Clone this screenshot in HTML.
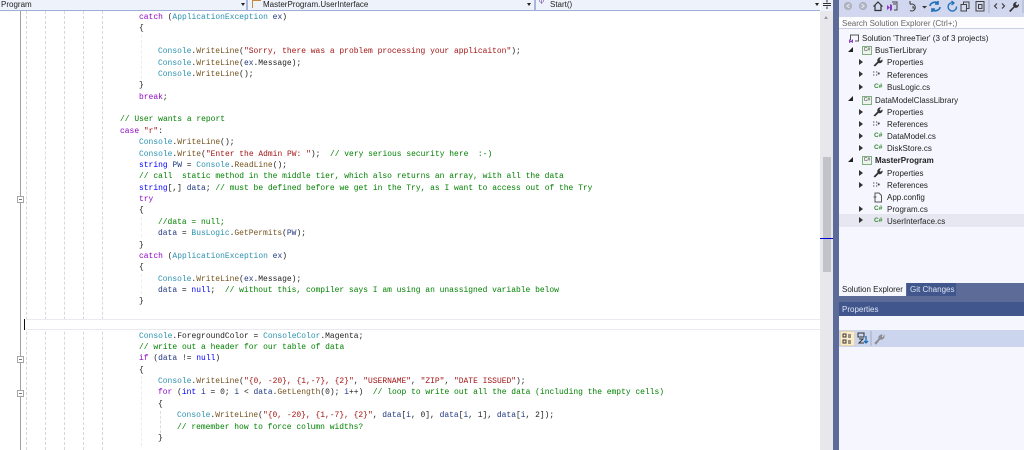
<!DOCTYPE html>
<html><head><meta charset="utf-8"><style>
html,body{margin:0;padding:0;width:1024px;height:450px;overflow:hidden;background:#fff}
body{position:relative;font-family:"Liberation Sans",sans-serif}
.a{position:absolute}
#code{position:absolute;left:0;top:1px;width:820px;height:449px;overflow:hidden;filter:blur(.33px)}
.l{position:absolute;white-space:pre;font:7.96px/11px "Liberation Mono",monospace;color:#1e1e1e}
.k{color:#8f08c4}.b{color:#0000ff}.t{color:#2b91af}.m{color:#74531f}.c{color:#008000}.s{color:#a31515}.v{color:#1f377f}
.g{position:absolute;width:0;border-left:1px dashed #d8d8d8}
#tree{position:absolute;left:0;top:2px;width:1024px;height:240px;filter:blur(.25px)}
.r{position:absolute;white-space:pre;font-size:8px;line-height:12px;color:#1e1e1e}
.tri{position:absolute;left:859px;width:0;height:0;border-left:4px solid #333;border-top:3.5px solid transparent;border-bottom:3.5px solid transparent}
.ex{position:absolute;left:848px;width:0;height:0;border-bottom:5px solid #222;border-left:5px solid transparent}
.cs{position:absolute;left:874px;font:bold 6.5px/8px "Liberation Sans",sans-serif;color:#388a34}
.pj{position:absolute;left:862px;width:8px;height:7px;border:1px solid #7fb07f;background:#eef3ee;font:5px/7px "Liberation Sans",sans-serif;text-align:center;color:#333}
.ref{position:absolute;left:873px;font:bold 7px/8px "Liberation Sans",sans-serif;color:#444}
.wr{position:absolute;left:873px}
.box{position:absolute;left:17px;width:5px;height:5px;border:1px solid #a5a5a5;background:#fff}
.box:after{content:"";position:absolute;left:1px;top:2px;width:3px;height:1px;background:#777}
</style></head><body>
<!-- top bar -->
<div class="a" style="left:0;top:0;width:820px;height:10px;background:#eef2fb;border-bottom:1px solid #9db0d8"></div>
<div class="a" style="left:246px;top:0;width:2px;height:10px;background:#a9b7dc"></div>
<div class="a" style="left:534px;top:0;width:2px;height:10px;background:#a9b7dc"></div>
<div class="a" style="left:1px;top:-1px;font-size:8px;line-height:11px;color:#1e1e1e">Program</div>
<div class="a" style="left:241px;top:3px;border:2.5px solid transparent;border-top:3px solid #222;border-bottom:0"></div>
<div class="a" style="left:252px;top:0;width:9px;height:8px;border-top:1px solid #c68a3c;border-left:1px solid #c68a3c;box-sizing:border-box"></div>
<div class="a" style="left:263px;top:-1px;font-size:8px;line-height:11px;color:#1e1e1e">MasterProgram.UserInterface</div>
<div class="a" style="left:527px;top:3px;border:2.5px solid transparent;border-top:3px solid #222;border-bottom:0"></div>
<div class="a" style="left:539px;top:0;font-size:6px;line-height:6px;color:#6d3fa8">&#936;</div>
<div class="a" style="left:550px;top:-1px;font-size:8px;line-height:11px;color:#1e1e1e">Start()</div>
<div class="a" style="left:815px;top:3px;border:2.5px solid transparent;border-top:3px solid #222;border-bottom:0"></div>
<div class="a" style="left:821px;top:0;width:12px;height:11px;background:#eef2fb"></div>
<svg class="a" style="left:821px;top:0" width="12" height="10" fill="none"><path d="M2 3.500h8M2 5.500h8M6 0v2.500M6 6.500V9" stroke="#333"/></svg>

<!-- gutter -->
<div class="a" style="left:20px;top:11px;width:1px;height:439px;background:#a0a0a0"></div>
<div class="g" style="left:26px;top:11px;height:439px"></div>
<div class="g" style="left:45px;top:11px;height:439px"></div>
<div class="g" style="left:64px;top:11px;height:439px"></div>
<div class="g" style="left:83px;top:11px;height:439px"></div>
<div class="g" style="left:102px;top:11px;height:439px"></div>
<div class="g" style="left:141px;top:35px;height:44px;border-color:#ececec"></div>
<div class="g" style="left:141px;top:217px;height:20px;border-color:#ececec"></div>
<div class="g" style="left:141px;top:274px;height:20px;border-color:#ececec"></div>
<div class="g" style="left:141px;top:376px;height:70px;border-color:#ececec"></div>
<div class="g" style="left:160px;top:411px;height:22px;border-color:#dcdcdc"></div>
<div class="box" style="top:196px"></div>
<div class="box" style="top:356px"></div>
<div class="box" style="top:390px"></div>
<div class="a" style="left:26px;top:319px;width:794px;height:9px;border-top:1px solid #eaeaf0;border-bottom:1px solid #eaeaf0;background:#fff"></div>
<div class="a" style="left:24px;top:319px;width:1px;height:11px;background:#111"></div>

<!-- code -->
<div id="code">
<div class="l" style="left:139px;top:11px"><span class="k">catch</span> (<span class="t">ApplicationException</span> <span class="v">ex</span>)</div>
<div class="l" style="left:139px;top:22.4px">{</div>
<div class="l" style="left:158px;top:45.1px"><span class="t">Console</span>.<span class="m">WriteLine</span>(<span class="s">"Sorry, there was a problem processing your applicaiton"</span>);</div>
<div class="l" style="left:158px;top:56.5px"><span class="t">Console</span>.<span class="m">WriteLine</span>(<span class="v">ex</span>.Message);</div>
<div class="l" style="left:158px;top:67.9px"><span class="t">Console</span>.<span class="m">WriteLine</span>();</div>
<div class="l" style="left:139px;top:79.2px">}</div>
<div class="l" style="left:139px;top:90.6px"><span class="k">break</span>;</div>
<div class="l" style="left:120px;top:113.3px"><span class="c">// User wants a report</span></div>
<div class="l" style="left:120px;top:124.7px"><span class="k">case</span> <span class="s">"r"</span>:</div>
<div class="l" style="left:139px;top:136.1px"><span class="t">Console</span>.<span class="m">WriteLine</span>();</div>
<div class="l" style="left:139px;top:147.5px"><span class="t">Console</span>.<span class="m">Write</span>(<span class="s">"Enter the Admin PW: "</span>);  <span class="c">// very serious security here  :-)</span></div>
<div class="l" style="left:139px;top:158.8px"><span class="b">string</span> <span class="v">PW</span> = <span class="t">Console</span>.<span class="m">ReadLine</span>();</div>
<div class="l" style="left:139px;top:170.2px"><span class="c">// call  static method in the middle tier, which also returns an array, with all the data</span></div>
<div class="l" style="left:139px;top:181.6px"><span class="b">string</span>[,] <span class="v">data</span>; <span class="c">// must be defined before we get in the Try, as I want to access out of the Try</span></div>
<div class="l" style="left:139px;top:193px"><span class="k">try</span></div>
<div class="l" style="left:139px;top:204.3px">{</div>
<div class="l" style="left:158px;top:215.7px"><span class="c">//data = null;</span></div>
<div class="l" style="left:158px;top:227.1px"><span class="v">data</span> = <span class="t">BusLogic</span>.<span class="m">GetPermits</span>(<span class="v">PW</span>);</div>
<div class="l" style="left:139px;top:238.5px">}</div>
<div class="l" style="left:139px;top:249.8px"><span class="k">catch</span> (<span class="t">ApplicationException</span> <span class="v">ex</span>)</div>
<div class="l" style="left:139px;top:261.2px">{</div>
<div class="l" style="left:158px;top:272.6px"><span class="t">Console</span>.<span class="m">WriteLine</span>(<span class="v">ex</span>.Message);</div>
<div class="l" style="left:158px;top:284px"><span class="v">data</span> = <span class="b">null</span>;  <span class="c">// without this, compiler says I am using an unassigned variable below</span></div>
<div class="l" style="left:139px;top:295.3px">}</div>
<div class="l" style="left:139px;top:329.5px"><span class="t">Console</span>.ForegroundColor = <span class="t">ConsoleColor</span>.Magenta;</div>
<div class="l" style="left:139px;top:340.9px"><span class="c">// write out a header for our table of data</span></div>
<div class="l" style="left:139px;top:352.2px"><span class="k">if</span> (<span class="v">data</span> != <span class="b">null</span>)</div>
<div class="l" style="left:139px;top:363.6px">{</div>
<div class="l" style="left:158px;top:375px"><span class="t">Console</span>.<span class="m">WriteLine</span>(<span class="s">"{0, -20}, {1,-7}, {2}"</span>, <span class="s">"USERNAME"</span>, <span class="s">"ZIP"</span>, <span class="s">"DATE ISSUED"</span>);</div>
<div class="l" style="left:158px;top:386.4px"><span class="k">for</span> (<span class="b">int</span> <span class="v">i</span> = 0; <span class="v">i</span> &lt; <span class="v">data</span>.<span class="m">GetLength</span>(0); <span class="v">i</span>++)  <span class="c">// loop to write out all the data (including the empty cells)</span></div>
<div class="l" style="left:158px;top:397.7px">{</div>
<div class="l" style="left:177px;top:409.1px"><span class="t">Console</span>.<span class="m">WriteLine</span>(<span class="s">"{0, -20}, {1,-7}, {2}"</span>, <span class="v">data</span>[<span class="v">i</span>, 0], <span class="v">data</span>[<span class="v">i</span>, 1], <span class="v">data</span>[<span class="v">i</span>, 2]);</div>
<div class="l" style="left:177px;top:420.5px"><span class="c">// remember how to force column widths?</span></div>
<div class="l" style="left:158px;top:431.9px">}</div>
</div>

<!-- scrollbar -->
<div class="a" style="left:820px;top:11px;width:13px;height:439px;background:#e8e8ec"></div>
<div class="a" style="left:824px;top:16px;border:2.5px solid transparent;border-bottom:3px solid #9a9aa2;border-top:0"></div>
<div class="a" style="left:823px;top:157px;width:8px;height:115px;background:#c2c3c9"></div>
<div class="a" style="left:820px;top:238px;width:13px;height:1px;background:#0000e0"></div>

<!-- right panel -->
<div class="a" style="left:833px;top:0;width:6px;height:450px;background:#5d6b99"></div>
<div class="a" style="left:839px;top:0;width:185px;height:450px;background:#f6f7fe"></div>
<div class="a" style="left:839px;top:0;width:185px;height:17px;background:#d0d7ee"></div>
<div class="a" style="left:839px;top:17px;width:185px;height:12px;background:#fdfdff;border-bottom:1px solid #c8cfe6;box-sizing:border-box"></div>
<div class="a" style="left:842px;top:18px;font-size:8px;line-height:12px;color:#666">Search Solution Explorer (Ctrl+;)</div>
<!-- toolbar icons -->
<svg class="a" style="left:839px;top:0" width="185" height="17" viewBox="0 0 185 17" fill="none">
<circle cx="9" cy="6" r="3.500" fill="#b4b8c6" stroke="#a8acb8"/><path d="M10.500 4L8 6l2.500 2" stroke="#e4e7f2"/>
<circle cx="24" cy="6" r="3.500" fill="#b4b8c6" stroke="#a8acb8"/><path d="M22.500 4L25 6l-2.500 2" stroke="#e4e7f2"/>
<path d="M34.500 6.500L39 2l4.500 4.500M36 5.500v5h6v-5" stroke="#333" stroke-width="1.200"/>
<path d="M48 5l3 2.500L48 10zM51 4v7l2-1V5z" fill="#8a3fc0"/>
<path d="M53 2h5v8h-3M54 4h3" stroke="#444"/>
<path d="M71 1v3M71 4.500a3.500 3.500 0 1 1 0 6M74 6v2h2" stroke="#444" stroke-width="1.100"/>
<path d="M83 6h5l-2.500 2.500z" fill="#333"/>
<path d="M91 6a5 4 0 0 1 8-3M99 1v3h-3M101 7a5 4 0 0 1-8 3M93 12V9h3" stroke="#1c6fb8" stroke-width="1.600"/>
<path d="M115 3a4.200 4.200 0 1 0 2.500 3.500M112.500 1l2.500 2-2.500 2" stroke="#1c6fb8" stroke-width="1.300"/>
<path d="M122 4.500h5.500v6.500H122zM124.500 4.500V2h5.500v6.500h-2.500" stroke="#444"/>
<path d="M137 1.500h8v9.500h-8zM139.500 4.500h3.500v4h-3.500z" stroke="#444"/>
<path d="M150 0v13" stroke="#a9b0c6"/>
<path d="M158 3.500L155.500 6l2.500 2.500M163 3.500l2.500 2.500-2.500 2.500" stroke="#333" stroke-width="1.100"/>
<path d="M170 11l4.500-4.500a3.200 3.200 0 0 1 3.500-4.500l-1.500 2 1.500 1.500 2-1.500a3.200 3.200 0 0 1-4.500 3.500L171.500 12z" fill="#333"/>
<path d="M184 0v13" stroke="#a9b0c6"/>
</svg>

<div id="tree">
<svg class="a" style="left:849px;top:32px" width="11" height="10" fill="none"><path d="M1.500 6V1h8v6H6" stroke="#555"/><path d="M0 5l2 2 2-2v4l-2-1-2 1z" fill="#8a3fc0"/></svg>
<div class="r" style="left:862px;top:31px">Solution 'ThreeTier' (3 of 3 projects)</div>

<div class="ex" style="top:45px"></div><div class="pj" style="top:44px">C#</div><div class="r" style="left:875px;top:43px">BusTierLibrary</div>
<div class="tri" style="top:57px"></div><div class="r" style="left:887px;top:55px">Properties</div>
<svg class="wr" style="top:55px" width="10" height="10"><path d="M0.500 8.500L4.500 4.500a3 3 0 0 1 3.500-4l-1.500 2 1 1.200 2-1.200a3 3 0 0 1-4 3.500L2 9.500z" fill="#333"/></svg>
<div class="tri" style="top:69px"></div><div class="ref" style="top:69px">&#8759;&#8226;</div><div class="r" style="left:887px;top:68px">References</div>
<div class="tri" style="top:82px"></div><div class="cs" style="top:81px">C#</div><div class="r" style="left:887px;top:80px">BusLogic.cs</div>

<div class="ex" style="top:94px"></div><div class="pj" style="top:94px">C#</div><div class="r" style="left:875px;top:93px">DataModelClassLibrary</div>
<div class="tri" style="top:107px"></div><div class="r" style="left:887px;top:105px">Properties</div>
<svg class="wr" style="top:105px" width="10" height="10"><path d="M0.500 8.500L4.500 4.500a3 3 0 0 1 3.500-4l-1.500 2 1 1.200 2-1.200a3 3 0 0 1-4 3.500L2 9.500z" fill="#333"/></svg>
<div class="tri" style="top:119px"></div><div class="ref" style="top:119px">&#8759;&#8226;</div><div class="r" style="left:887px;top:117px">References</div>
<div class="tri" style="top:131px"></div><div class="cs" style="top:130px">C#</div><div class="r" style="left:887px;top:129px">DataModel.cs</div>
<div class="tri" style="top:143px"></div><div class="cs" style="top:142px">C#</div><div class="r" style="left:887px;top:141px">DiskStore.cs</div>

<div class="ex" style="top:155px"></div><div class="pj" style="top:154px">C#</div><div class="r" style="left:875px;top:153px;font-weight:bold">MasterProgram</div>
<div class="tri" style="top:168px"></div><div class="r" style="left:887px;top:166px">Properties</div>
<svg class="wr" style="top:166px" width="10" height="10"><path d="M0.500 8.500L4.500 4.500a3 3 0 0 1 3.500-4l-1.500 2 1 1.200 2-1.200a3 3 0 0 1-4 3.500L2 9.500z" fill="#333"/></svg>
<div class="tri" style="top:180px"></div><div class="ref" style="top:180px">&#8759;&#8226;</div><div class="r" style="left:887px;top:178px">References</div>
<svg class="wr" style="top:190px" width="10" height="11" fill="none"><path d="M2 1h4l2.500 2.500V10H2z" stroke="#555"/><path d="M0.500 5h3" stroke="#555"/></svg><div class="r" style="left:887px;top:190px">App.config</div>
<div class="tri" style="top:204px"></div><div class="cs" style="top:203px">C#</div><div class="r" style="left:887px;top:202px">Program.cs</div>
<div class="a" style="left:839px;top:212px;width:185px;height:13px;background:#e6e7f0"></div>
<div class="tri" style="top:215px"></div><div class="cs" style="top:215px">C#</div><div class="r" style="left:887px;top:214px">UserInterface.cs</div>
</div>

<!-- tabs -->
<div class="a" style="left:839px;top:283px;width:185px;height:19px;background:#5d6b99"></div>
<div class="a" style="left:839px;top:283px;width:67px;height:13px;background:#f6f7fe;font-size:8px;line-height:14px;color:#1e1e1e;text-indent:3px">Solution Explorer</div>
<div class="a" style="left:907px;top:283px;width:49px;height:13px;background:#40568d;font-size:8px;line-height:14px;color:#dfe4f2;text-indent:3px">Git Changes</div>
<div class="a" style="left:839px;top:302px;width:185px;height:14px;background:#40568d;font-size:8px;line-height:15px;color:#dfe4f2;text-indent:3px">Properties</div>
<div class="a" style="left:839px;top:330px;width:185px;height:17px;background:#ccd5ee"></div>
<div class="a" style="left:840px;top:331px;width:15px;height:15px;background:#fbeccb;border:1px solid #e6d6ae;box-sizing:border-box"></div>
<svg class="a" style="left:839px;top:330px" width="50" height="17" fill="none">
<path d="M4 4h3v3H4zM4 10h3v3H4z" stroke="#333"/><path d="M9 5h3M9 7h3M9 11h3M9 13h3" stroke="#333"/>
<path d="M19 3h6v4h-6zM20 9h4l-4 4h5" stroke="#333"/><path d="M27 6v7M25 11l2 2 2-2" stroke="#1c6fb8" stroke-width="1.300"/>
<path d="M32 1v15" stroke="#a5acc2"/>
<path d="M36 13l4-4a3 3 0 0 1 3-4l-1 2 2 1 1-2a3 3 0 0 1-4 3l-4 5z" fill="#8d8d92" stroke="#8d8d92"/>
</svg>
</body></html>
